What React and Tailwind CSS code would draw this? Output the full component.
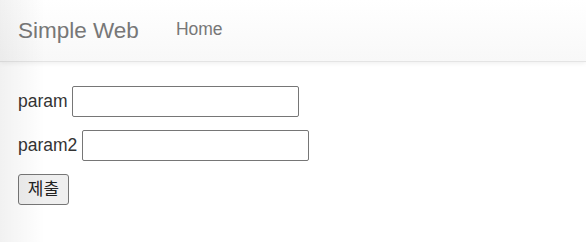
export default function App() {
  const font = { fontFamily: '"Liberation Sans", Arial, "Noto Sans CJK KR", sans-serif' }

  return (
    <div className="relative min-h-[242px] bg-white text-[17.5px] leading-[25px] text-[#333]" style={font}>
      {/* Navbar */}
      <nav className="h-[62px] flex items-center bg-gradient-to-b from-white to-[#f8f8f8] border-b border-[#e4e4e4] shadow-[0_1px_5px_rgba(0,0,0,0.075)]">
        <span className="px-[18px] text-[22.5px] text-[#777]">Simple Web</span>
        <span className="ml-[1px] px-[18px] text-[17.5px] text-[#777] -mt-[3px]">Home</span>
      </nav>

      {/* Form */}
      <form className="mt-[24px] px-[18px] flex flex-col gap-[13px] items-start">
        <label className="flex items-center gap-[4px]">
          <span>param</span>
          <input
            type="text"
            className="w-[227px] h-[31px] border border-[#767676] rounded-[2px] bg-white"
          />
        </label>
        <label className="flex items-center gap-[5px]">
          <span>param2</span>
          <input
            type="text"
            className="w-[227px] h-[31px] border border-[#767676] rounded-[2px] bg-white"
          />
        </label>
        <button
          type="button"
          className="w-[51px] h-[31px] border border-[#767676] rounded-[3px] bg-[#efefef] text-[17px] text-[#222] leading-none"
        >
          제출
        </button>
      </form>

      {/* left edge shading */}
      <div className="pointer-events-none absolute inset-y-0 left-0 w-[45px] bg-gradient-to-r from-[rgba(0,0,0,0.055)] to-transparent" />
    </div>
  )
}
